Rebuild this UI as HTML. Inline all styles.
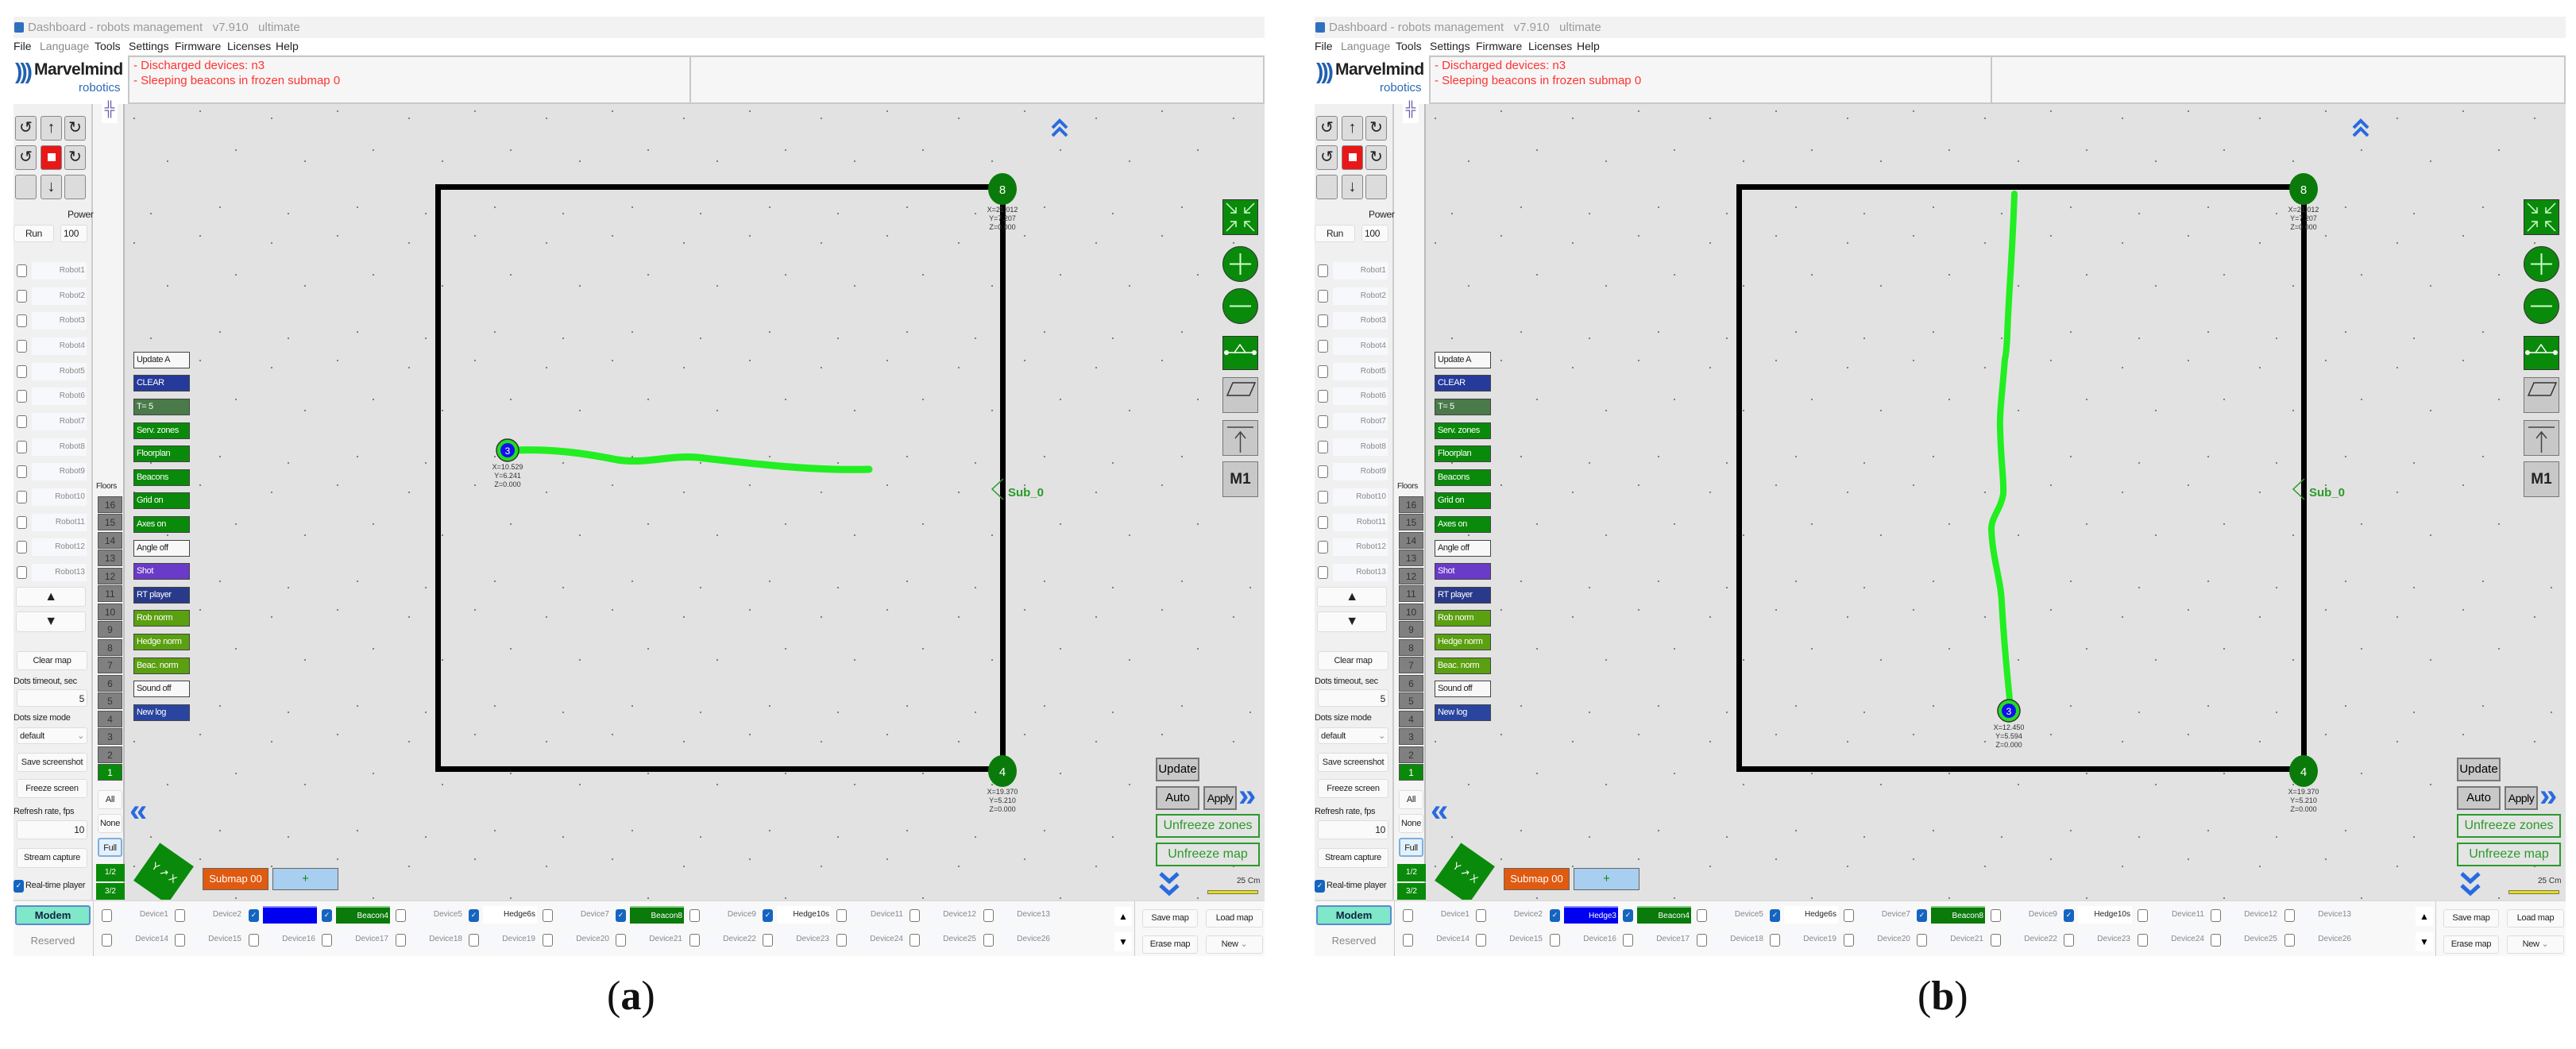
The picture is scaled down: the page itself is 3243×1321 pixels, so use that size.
<!DOCTYPE html>
<html><head><meta charset="utf-8">
<style>
*{margin:0;padding:0;box-sizing:border-box}
body{width:3243px;height:1321px;background:#fff;position:relative;overflow:hidden;font-family:"Liberation Sans",sans-serif}
.p{position:absolute;top:21px;width:1575px;height:1183px;background:#f0f0f0;overflow:hidden}
.a{position:absolute}
.tt{left:0;top:0;width:1575px;height:27px;background:#f2f2f2;color:#9a9a9a;font-size:15px;line-height:27px;padding-left:18px}
.ti{left:1px;top:7px;width:12px;height:13px;background:#2f6fc0;border-radius:2px}
.mn{left:0;top:27px;width:1575px;height:21px;background:#fff;font-size:14px;line-height:21px;color:#222}
.mn span{position:absolute;top:0}
.hb{top:49px;height:61px;background:#f6f6f6;border:2px solid #c8c8c8}
.msg{left:151px;color:#ff3333;font-size:15px}
.map{left:140px;top:110px}
.rb{width:27px;height:31px;background:#dcdcdc;border:1px solid #888;border-radius:3px;font-size:20px;text-align:center;line-height:29px;color:#222}
.btn{background:#fafafa;border:1px solid #ddd;border-radius:3px;font-size:11px;letter-spacing:-0.3px;text-align:center;color:#222;white-space:nowrap;overflow:hidden}
.cb{position:absolute;width:13px;height:16px;border:1.5px solid #777;border-radius:3px;background:#fff}
.ck{background:#1565c0;border-color:#1565c0;color:#fff;font-size:9px;line-height:13px;text-align:center}
.rl{position:absolute;left:19px;width:69px;height:22px;background:#f7f8fb;font-size:10px;color:#888;text-align:right;line-height:22px;padding-right:2px;white-space:nowrap;overflow:hidden}
.fl{left:106px;width:31px;height:21px;background:#808080;border:1px solid #555;font-size:12px;text-align:center;line-height:20px;color:#333}
.gb{left:151px;width:71px;height:21px;font-size:11px;letter-spacing:-0.4px;color:#fff;line-height:19px;padding-left:3px;border:1px solid #444;white-space:nowrap;overflow:hidden}
.lbl{font-size:11px;letter-spacing:-0.3px;color:#222;white-space:nowrap}
.dc{position:absolute;width:88px;height:24px}
.dc .rl{left:18px;width:68px}
.rt{left:1522px;width:45px;height:45px}
.gbtn{border:2px solid #2a9a2a;color:#2a9a2a;background:#e4e4e4;font-size:16px;text-align:center}
.cap{top:1225px;font-family:"Liberation Serif",serif;font-size:52px;color:#111}
.logo{left:26px;top:55px;font-size:21px;font-weight:bold;color:#222;letter-spacing:-0.5px}
</style></head><body>

<!-- ================= PANEL A ================= -->
<div class="p" style="left:17px">
<div class="a tt">Dashboard - robots management &nbsp; v7.910 &nbsp; ultimate</div>
<div class="a ti"></div>
<div class="a mn"><span style="left:0">File</span><span style="left:33px;color:#888">Language</span><span style="left:102px">Tools</span><span style="left:145px">Settings</span><span style="left:203px">Firmware</span><span style="left:269px">Licenses</span><span style="left:330px">Help</span></div>
<div class="a" style="left:0;top:48px;width:144px;height:62px;background:#fff"></div>
<div class="a" style="left:2px;top:53px;font-size:28px;font-weight:bold;color:#2060b0;letter-spacing:-3px">)))</div>
<div class="a logo">Marvelmind</div>
<div class="a" style="left:82px;top:81px;font-size:15px;color:#2a6ab8">robotics</div>
<div class="a hb" style="left:144px;width:709px"></div>
<div class="a hb" style="left:851px;width:724px"></div>
<div class="a msg" style="top:53px">- Discharged devices: n3</div>
<div class="a msg" style="top:72px">- Sleeping beacons in frozen submap 0</div>

<svg class="a map" width="1435" height="1002" viewBox="0 0 1435 1002">
<defs><pattern id="dt" width="173" height="157" patternUnits="userSpaceOnUse">
<circle cx="12" cy="18" r="1.1" fill="#777"/><circle cx="95" cy="9" r="1.1" fill="#777"/><circle cx="54" cy="72" r="1.1" fill="#777"/><circle cx="140" cy="58" r="1.1" fill="#777"/><circle cx="120" cy="130" r="1.1" fill="#777"/><circle cx="33" cy="138" r="1.1" fill="#777"/></pattern></defs>
<rect width="1435" height="1002" fill="#e2e2e2"/>
<rect width="1435" height="1002" fill="url(#dt)"/>
<rect x="394.5" y="104.5" width="711" height="733" fill="none" stroke="#000" stroke-width="7"/>
<path d="M490 436 C540 434 580 440 620 448 C660 454 690 440 730 446 C800 454 870 462 937 460" fill="none" stroke="#22ee22" stroke-width="9" stroke-linecap="round"/>
<circle cx="482" cy="436" r="14" fill="#22dd22" stroke="#333" stroke-width="1.5"/><circle cx="482" cy="436" r="9" fill="#1010ee"/>
<text x="482" y="441" font-size="12" fill="#fff" text-anchor="middle">3</text>
<text x="482" y="460" font-size="9" fill="#333" text-anchor="middle">X=10.529</text><text x="482" y="471" font-size="9" fill="#333" text-anchor="middle">Y=6.241</text><text x="482" y="482" font-size="9" fill="#333" text-anchor="middle">Z=0.000</text>
<ellipse cx="1105" cy="107" rx="18" ry="20" fill="#0a7a0a"/><text x="1105" y="113" font-size="15" fill="#fff" text-anchor="middle">8</text>
<text x="1105" y="136" font-size="9" fill="#333" text-anchor="middle">X=21.012</text><text x="1105" y="147" font-size="9" fill="#333" text-anchor="middle">Y=7.207</text><text x="1105" y="158" font-size="9" fill="#333" text-anchor="middle">Z=0.000</text>
<ellipse cx="1105" cy="840" rx="18" ry="20" fill="#0a7a0a"/><text x="1105" y="846" font-size="15" fill="#fff" text-anchor="middle">4</text>
<text x="1105" y="869" font-size="9" fill="#333" text-anchor="middle">X=19.370</text><text x="1105" y="880" font-size="9" fill="#333" text-anchor="middle">Y=5.210</text><text x="1105" y="891" font-size="9" fill="#333" text-anchor="middle">Z=0.000</text>
<path d="M1106 472 L1092 485 L1106 498" fill="none" stroke="#2a9a2a" stroke-width="1.5"/>
<text x="1112" y="494" font-size="15" font-weight="bold" fill="#2a9a2a">Sub_0</text>
<path d="M1168 30 L1177 21 L1186 30 M1168 40 L1177 31 L1186 40" fill="none" stroke="#2a6ae0" stroke-width="4"/>
</svg>

<div class="a" style="left:0;top:110px;width:100px;height:1002px;background:#f0f0f0;border-right:2px solid #ccc"></div>
<div class="a" style="left:100px;top:110px;width:40px;height:1002px;background:#f4f4f4;border-right:2px solid #bbb"></div>
<div class="a" style="left:111px;top:106px;width:20px;height:28px;background:#fff;color:#6a5aa8;font-size:18px;text-align:center">╬</div>
<div class="a rb" style="left:2px;top:125px">↺</div><div class="a rb" style="left:34px;top:125px">↑</div><div class="a rb" style="left:64px;top:125px">↻</div>
<div class="a rb" style="left:2px;top:162px">↺</div><div class="a rb" style="left:34px;top:162px;background:#e81818"><div style="width:10px;height:10px;background:#fff;margin:9px auto"></div></div><div class="a rb" style="left:64px;top:162px">↻</div>
<div class="a rb" style="left:2px;top:199px"></div><div class="a rb" style="left:34px;top:199px;color:#223">↓</div><div class="a rb" style="left:64px;top:199px"></div>
<div class="a lbl" style="left:68px;top:242px;font-size:12px">Power</div>
<div class="a btn" style="left:0;top:262px;width:51px;height:22px;line-height:20px;font-size:12px">Run</div>
<div class="a btn" style="left:59px;top:262px;width:34px;height:22px;line-height:20px;text-align:left;padding-left:3px;font-size:12px">100</div>

<div class="a" style="left:4px;top:309px;width:96px;height:420px">
<div class="cb" style="left:0;top:3px"></div><div class="rl" style="top:0">Robot1</div>
<div class="cb" style="left:0;top:35px"></div><div class="rl" style="top:32px">Robot2</div>
<div class="cb" style="left:0;top:66px"></div><div class="rl" style="top:63px">Robot3</div>
<div class="cb" style="left:0;top:98px"></div><div class="rl" style="top:95px">Robot4</div>
<div class="cb" style="left:0;top:130px"></div><div class="rl" style="top:127px">Robot5</div>
<div class="cb" style="left:0;top:161px"></div><div class="rl" style="top:158px">Robot6</div>
<div class="cb" style="left:0;top:193px"></div><div class="rl" style="top:190px">Robot7</div>
<div class="cb" style="left:0;top:225px"></div><div class="rl" style="top:222px">Robot8</div>
<div class="cb" style="left:0;top:256px"></div><div class="rl" style="top:253px">Robot9</div>
<div class="cb" style="left:0;top:288px"></div><div class="rl" style="top:285px">Robot10</div>
<div class="cb" style="left:0;top:320px"></div><div class="rl" style="top:317px">Robot11</div>
<div class="cb" style="left:0;top:351px"></div><div class="rl" style="top:348px">Robot12</div>
<div class="cb" style="left:0;top:383px"></div><div class="rl" style="top:380px">Robot13</div>
</div>
<div class="a btn" style="left:3px;top:718px;width:88px;height:25px;font-size:16px;line-height:24px">▲</div>
<div class="a btn" style="left:3px;top:749px;width:88px;height:26px;font-size:16px;line-height:24px">▼</div>

<div class="a lbl" style="left:104px;top:586px;font-size:10px">Floors</div>
<div class="a fl" style="top:604px">16</div><div class="a fl" style="top:626px">15</div><div class="a fl" style="top:649px">14</div><div class="a fl" style="top:671px">13</div><div class="a fl" style="top:694px">12</div><div class="a fl" style="top:716px">11</div><div class="a fl" style="top:739px">10</div><div class="a fl" style="top:761px">9</div><div class="a fl" style="top:784px">8</div><div class="a fl" style="top:806px">7</div><div class="a fl" style="top:829px">6</div><div class="a fl" style="top:851px">5</div><div class="a fl" style="top:874px">4</div><div class="a fl" style="top:896px">3</div><div class="a fl" style="top:919px">2</div><div class="a fl" style="top:941px;background:#0a8a0a;color:#fff">1</div>
<div class="a btn" style="left:106px;top:974px;width:31px;height:24px;font-size:11px;line-height:22px">All</div>
<div class="a btn" style="left:106px;top:1004px;width:31px;height:24px;font-size:11px;line-height:22px">None</div>
<div class="a btn" style="left:106px;top:1034px;width:31px;height:24px;font-size:11px;line-height:22px;border:2px solid #7ab0e0;background:#e4f0fb">Full</div>
<div class="a" style="left:104px;top:1067px;width:36px;height:22px;background:#0a8a0a;color:#fff;font-size:10px;text-align:center;line-height:22px">1/2</div>
<div class="a" style="left:104px;top:1091px;width:36px;height:22px;background:#0a8a0a;color:#fff;font-size:10px;text-align:center;line-height:22px">3/2</div>

<div class="a gb" style="top:422px;background:#f8f8f8;color:#222">Update A</div>
<div class="a gb" style="top:451px;background:#253a9a">CLEAR</div>
<div class="a gb" style="top:481px;background:#4a7a4a">T= 5</div>
<div class="a gb" style="top:511px;background:#0a8a0a">Serv. zones</div>
<div class="a gb" style="top:540px;background:#0a8a0a">Floorplan</div>
<div class="a gb" style="top:570px;background:#0a8a0a">Beacons</div>
<div class="a gb" style="top:599px;background:#0a8a0a">Grid on</div>
<div class="a gb" style="top:629px;background:#0a8a0a">Axes on</div>
<div class="a gb" style="top:659px;background:#f8f8f8;color:#222">Angle off</div>
<div class="a gb" style="top:688px;background:#6a3ac8">Shot</div>
<div class="a gb" style="top:718px;background:#2a3a8a">RT player</div>
<div class="a gb" style="top:747px;background:#5aa010">Rob norm</div>
<div class="a gb" style="top:777px;background:#5aa010">Hedge norm</div>
<div class="a gb" style="top:807px;background:#5aa010">Beac. norm</div>
<div class="a gb" style="top:836px;background:#f8f8f8;color:#222">Sound off</div>
<div class="a gb" style="top:866px;background:#2a45a0">New log</div>

<div class="a btn" style="left:4px;top:799px;width:89px;height:24px;line-height:22px">Clear map</div>
<div class="a lbl" style="left:0;top:831px">Dots timeout, sec</div>
<div class="a btn" style="left:4px;top:847px;width:89px;height:22px;text-align:right;padding-right:3px;line-height:22px;font-size:12px">5</div>
<div class="a lbl" style="left:0;top:877px">Dots size mode</div>
<div class="a btn" style="left:4px;top:895px;width:89px;height:21px;text-align:left;padding-left:3px;line-height:20px">default <span style="float:right;color:#888;padding-right:3px">⌄</span></div>
<div class="a btn" style="left:4px;top:927px;width:89px;height:24px;line-height:22px">Save screenshot</div>
<div class="a btn" style="left:4px;top:960px;width:89px;height:24px;line-height:22px">Freeze screen</div>
<div class="a lbl" style="left:0;top:995px">Refresh rate, fps</div>
<div class="a btn" style="left:4px;top:1012px;width:89px;height:24px;text-align:right;padding-right:3px;line-height:22px;font-size:12px">10</div>
<div class="a btn" style="left:4px;top:1047px;width:89px;height:25px;line-height:23px">Stream capture</div>
<div class="a cb ck" style="left:0;top:1087px">✓</div><div class="a lbl" style="left:15px;top:1088px">Real-time player</div>

<div class="a" style="left:146px;top:985px;font-size:40px;color:#2a6ae0;font-weight:bold;line-height:30px">«</div>
<div class="a" style="left:163px;top:1050px;width:52px;height:58px;background:#0a8a0a;transform:rotate(35deg);color:#fff;font-size:13px;text-align:center;line-height:56px">Y ↗ X</div>
<div class="a" style="left:238px;top:1072px;width:83px;height:28px;background:#e05a10;border:1px solid #666;color:#fff;font-size:13px;text-align:center;line-height:26px">Submap 00</div>
<div class="a" style="left:326px;top:1072px;width:83px;height:28px;background:#a8cef0;border:1px solid #666;color:#0a8a0a;font-size:15px;text-align:center;line-height:26px">+</div>

<div class="a rt" style="top:230px;background:#0a8a0a;border:1px solid #333"><svg width="43" height="43"><path d="M4 4 L16 16 M16 9 V16 H9 M39 4 L27 16 M27 9 V16 H34 M4 39 L16 27 M9 27 H16 V34 M39 39 L27 27 M34 27 H27 V34" stroke="#cfc" stroke-width="1.5" fill="none"/></svg></div>
<div class="a rt" style="top:289px;background:#0a8a0a;border-radius:50%;border:1px solid #333"><svg width="43" height="43"><path d="M21.5 8 V35 M8 21.5 H35" stroke="#cfc" stroke-width="2"/></svg></div>
<div class="a rt" style="top:342px;background:#0a8a0a;border-radius:50%;border:1px solid #333"><svg width="43" height="43"><path d="M8 21.5 H35" stroke="#cfc" stroke-width="2"/></svg></div>
<div class="a rt" style="top:402px;height:43px;background:#0a8a0a;border:1px solid #333"><svg width="43" height="41"><path d="M4 20 H39 M14 20 L21 10 L28 20" stroke="#fff" stroke-width="1.5" fill="none"/><circle cx="4" cy="20" r="3" fill="#fff"/><circle cx="39" cy="20" r="3" fill="#fff"/></svg></div>
<div class="a rt" style="top:454px;background:#c8c8c8;border:1px solid #777"><svg width="43" height="43"><path d="M12 6 H40 L33 22 H5 Z" stroke="#333" stroke-width="1.5" fill="none"/></svg></div>
<div class="a rt" style="top:508px;background:#c8c8c8;border:1px solid #777"><svg width="43" height="43"><path d="M5 8 H38 M21.5 40 V14 M15 22 L21.5 14 L28 22" stroke="#444" stroke-width="1.5" fill="none"/></svg></div>
<div class="a rt" style="top:560px;background:#c8c8c8;border:1px solid #777;font-size:19px;font-weight:bold;text-align:center;line-height:43px;color:#222">M1</div>

<div class="a" style="left:1438px;top:933px;width:55px;height:30px;background:#c8c8c8;border:2px solid #777;font-size:15px;text-align:center;line-height:26px">Update</div>
<div class="a" style="left:1438px;top:969px;width:55px;height:30px;background:#c8c8c8;border:2px solid #777;font-size:15px;text-align:center;line-height:26px">Auto</div>
<div class="a" style="left:1498px;top:969px;width:42px;height:30px;background:#c8c8c8;border:2px solid #777;font-size:14px;letter-spacing:-0.5px;text-align:center;line-height:26px">Apply</div>
<div class="a" style="left:1542px;top:963px;font-size:40px;color:#2a6ae0;font-weight:bold;line-height:36px">»</div>
<div class="a gbtn" style="left:1438px;top:1004px;width:131px;height:30px;line-height:26px">Unfreeze zones</div>
<div class="a gbtn" style="left:1438px;top:1040px;width:131px;height:30px;line-height:26px">Unfreeze map</div>
<svg class="a" style="left:1441px;top:1076px" width="28" height="34"><path d="M3 3 L14 13 L25 3 M3 18 L14 28 L25 18" stroke="#2a6ae0" stroke-width="5" fill="none"/></svg>
<div class="a" style="left:1540px;top:1083px;font-size:10px;color:#333">25 Cm</div>
<div class="a" style="left:1503px;top:1100px;width:64px;height:5px;background:#e8e000;border:1px solid #777"></div>

<div class="a" style="left:0;top:1112px;width:1575px;height:71px;background:#f8f8f8;border-top:2px solid #ddd"></div>
<div class="a" style="left:2px;top:1119px;width:95px;height:25px;background:#7ee8c8;border:2px solid #5a8ad0;border-radius:3px;font-size:13px;font-weight:bold;text-align:center;line-height:21px;color:#124">Modem</div>
<div class="a" style="left:2px;top:1151px;width:95px;height:25px;font-size:13px;text-align:center;line-height:25px;color:#888">Reserved</div>
<div class="a" style="left:100px;top:1114px;width:1px;height:69px;background:#ccc"></div>
<div class="a" style="left:0;top:1120px">
<div class="dc" style="left:111px"><div class="cb" style="top:4px"></div><div class="rl">Device1</div></div>
<div class="dc" style="left:203px"><div class="cb" style="top:4px"></div><div class="rl">Device2</div></div>
<div class="dc" style="left:296px"><div class="cb ck" style="top:4px">✓</div><div class="rl" style="background:#0000f0;border-top:2px solid #88f"></div></div>
<div class="dc" style="left:388px"><div class="cb ck" style="top:4px">✓</div><div class="rl" style="background:#0a7a0a;color:#fff;border-top:2px solid #8c8">Beacon4</div></div>
<div class="dc" style="left:481px"><div class="cb" style="top:4px"></div><div class="rl">Device5</div></div>
<div class="dc" style="left:573px"><div class="cb ck" style="top:4px">✓</div><div class="rl" style="background:#fff;color:#222">Hedge6s</div></div>
<div class="dc" style="left:666px"><div class="cb" style="top:4px"></div><div class="rl">Device7</div></div>
<div class="dc" style="left:758px"><div class="cb ck" style="top:4px">✓</div><div class="rl" style="background:#0a7a0a;color:#fff;border-top:2px solid #8c8">Beacon8</div></div>
<div class="dc" style="left:851px"><div class="cb" style="top:4px"></div><div class="rl">Device9</div></div>
<div class="dc" style="left:943px"><div class="cb ck" style="top:4px">✓</div><div class="rl" style="background:#fff;color:#222">Hedge10s</div></div>
<div class="dc" style="left:1036px"><div class="cb" style="top:4px"></div><div class="rl">Device11</div></div>
<div class="dc" style="left:1128px"><div class="cb" style="top:4px"></div><div class="rl">Device12</div></div>
<div class="dc" style="left:1221px"><div class="cb" style="top:4px"></div><div class="rl">Device13</div></div>
</div>
<div class="a" style="left:0;top:1151px">
<div class="dc" style="left:111px"><div class="cb" style="top:4px"></div><div class="rl">Device14</div></div>
<div class="dc" style="left:203px"><div class="cb" style="top:4px"></div><div class="rl">Device15</div></div>
<div class="dc" style="left:296px"><div class="cb" style="top:4px"></div><div class="rl">Device16</div></div>
<div class="dc" style="left:388px"><div class="cb" style="top:4px"></div><div class="rl">Device17</div></div>
<div class="dc" style="left:481px"><div class="cb" style="top:4px"></div><div class="rl">Device18</div></div>
<div class="dc" style="left:573px"><div class="cb" style="top:4px"></div><div class="rl">Device19</div></div>
<div class="dc" style="left:666px"><div class="cb" style="top:4px"></div><div class="rl">Device20</div></div>
<div class="dc" style="left:758px"><div class="cb" style="top:4px"></div><div class="rl">Device21</div></div>
<div class="dc" style="left:851px"><div class="cb" style="top:4px"></div><div class="rl">Device22</div></div>
<div class="dc" style="left:943px"><div class="cb" style="top:4px"></div><div class="rl">Device23</div></div>
<div class="dc" style="left:1036px"><div class="cb" style="top:4px"></div><div class="rl">Device24</div></div>
<div class="dc" style="left:1128px"><div class="cb" style="top:4px"></div><div class="rl">Device25</div></div>
<div class="dc" style="left:1221px"><div class="cb" style="top:4px"></div><div class="rl">Device26</div></div>
</div>
<div class="a" style="left:1386px;top:1121px;width:22px;height:24px;background:#fff;font-size:12px;text-align:center;line-height:24px">▲</div>
<div class="a" style="left:1386px;top:1153px;width:22px;height:24px;background:#fff;font-size:12px;text-align:center;line-height:24px">▼</div>
<div class="a" style="left:1411px;top:1114px;width:1px;height:69px;background:#ccc"></div>
<div class="a btn" style="left:1421px;top:1124px;width:70px;height:23px;line-height:21px">Save map</div>
<div class="a btn" style="left:1501px;top:1124px;width:72px;height:23px;line-height:21px">Load map</div>
<div class="a btn" style="left:1421px;top:1157px;width:70px;height:23px;line-height:21px">Erase map</div>
<div class="a btn" style="left:1501px;top:1157px;width:72px;height:23px;line-height:21px">New <span style="color:#888">⌄</span></div>
</div>

<!-- ================= PANEL B ================= -->
<div class="p" style="left:1655px">
<div class="a tt">Dashboard - robots management &nbsp; v7.910 &nbsp; ultimate</div>
<div class="a ti"></div>
<div class="a mn"><span style="left:0">File</span><span style="left:33px;color:#888">Language</span><span style="left:102px">Tools</span><span style="left:145px">Settings</span><span style="left:203px">Firmware</span><span style="left:269px">Licenses</span><span style="left:330px">Help</span></div>
<div class="a" style="left:0;top:48px;width:144px;height:62px;background:#fff"></div>
<div class="a" style="left:2px;top:53px;font-size:28px;font-weight:bold;color:#2060b0;letter-spacing:-3px">)))</div>
<div class="a logo">Marvelmind</div>
<div class="a" style="left:82px;top:81px;font-size:15px;color:#2a6ab8">robotics</div>
<div class="a hb" style="left:144px;width:709px"></div>
<div class="a hb" style="left:851px;width:724px"></div>
<div class="a msg" style="top:53px">- Discharged devices: n3</div>
<div class="a msg" style="top:72px">- Sleeping beacons in frozen submap 0</div>

<svg class="a map" width="1435" height="1002" viewBox="0 0 1435 1002">
<rect width="1435" height="1002" fill="#e2e2e2"/>
<rect width="1435" height="1002" fill="url(#dt)"/>
<rect x="394.5" y="104.5" width="711" height="733" fill="none" stroke="#000" stroke-width="7"/>
<path d="M741 113 C738 200 733 250 732 292 C731 310 730 318 729 321 C726 360 722 390 723 409 C724 450 728 475 727 491 C724 510 712 520 712 535 C713 570 724 600 725 627 C728 680 732 720 735 749" fill="none" stroke="#22ee22" stroke-width="8" stroke-linecap="round"/>
<circle cx="734" cy="764" r="14" fill="#22dd22" stroke="#333" stroke-width="1.5"/><circle cx="734" cy="764" r="9" fill="#1010ee"/>
<text x="734" y="769" font-size="12" fill="#fff" text-anchor="middle">3</text>
<text x="734" y="788" font-size="9" fill="#333" text-anchor="middle">X=12.450</text><text x="734" y="799" font-size="9" fill="#333" text-anchor="middle">Y=5.594</text><text x="734" y="810" font-size="9" fill="#333" text-anchor="middle">Z=0.000</text>
<ellipse cx="1105" cy="107" rx="18" ry="20" fill="#0a7a0a"/><text x="1105" y="113" font-size="15" fill="#fff" text-anchor="middle">8</text>
<text x="1105" y="136" font-size="9" fill="#333" text-anchor="middle">X=21.012</text><text x="1105" y="147" font-size="9" fill="#333" text-anchor="middle">Y=7.207</text><text x="1105" y="158" font-size="9" fill="#333" text-anchor="middle">Z=0.000</text>
<ellipse cx="1105" cy="840" rx="18" ry="20" fill="#0a7a0a"/><text x="1105" y="846" font-size="15" fill="#fff" text-anchor="middle">4</text>
<text x="1105" y="869" font-size="9" fill="#333" text-anchor="middle">X=19.370</text><text x="1105" y="880" font-size="9" fill="#333" text-anchor="middle">Y=5.210</text><text x="1105" y="891" font-size="9" fill="#333" text-anchor="middle">Z=0.000</text>
<path d="M1106 472 L1092 485 L1106 498" fill="none" stroke="#2a9a2a" stroke-width="1.5"/>
<text x="1112" y="494" font-size="15" font-weight="bold" fill="#2a9a2a">Sub_0</text>
<path d="M1168 30 L1177 21 L1186 30 M1168 40 L1177 31 L1186 40" fill="none" stroke="#2a6ae0" stroke-width="4"/>
</svg>

<div class="a" style="left:0;top:110px;width:100px;height:1002px;background:#f0f0f0;border-right:2px solid #ccc"></div>
<div class="a" style="left:100px;top:110px;width:40px;height:1002px;background:#f4f4f4;border-right:2px solid #bbb"></div>
<div class="a" style="left:111px;top:106px;width:20px;height:28px;background:#fff;color:#6a5aa8;font-size:18px;text-align:center">╬</div>
<div class="a rb" style="left:2px;top:125px">↺</div><div class="a rb" style="left:34px;top:125px">↑</div><div class="a rb" style="left:64px;top:125px">↻</div>
<div class="a rb" style="left:2px;top:162px">↺</div><div class="a rb" style="left:34px;top:162px;background:#e81818"><div style="width:10px;height:10px;background:#fff;margin:9px auto"></div></div><div class="a rb" style="left:64px;top:162px">↻</div>
<div class="a rb" style="left:2px;top:199px"></div><div class="a rb" style="left:34px;top:199px;color:#223">↓</div><div class="a rb" style="left:64px;top:199px"></div>
<div class="a lbl" style="left:68px;top:242px;font-size:12px">Power</div>
<div class="a btn" style="left:0;top:262px;width:51px;height:22px;line-height:20px;font-size:12px">Run</div>
<div class="a btn" style="left:59px;top:262px;width:34px;height:22px;line-height:20px;text-align:left;padding-left:3px;font-size:12px">100</div>

<div class="a" style="left:4px;top:309px;width:96px;height:420px">
<div class="cb" style="left:0;top:3px"></div><div class="rl" style="top:0">Robot1</div>
<div class="cb" style="left:0;top:35px"></div><div class="rl" style="top:32px">Robot2</div>
<div class="cb" style="left:0;top:66px"></div><div class="rl" style="top:63px">Robot3</div>
<div class="cb" style="left:0;top:98px"></div><div class="rl" style="top:95px">Robot4</div>
<div class="cb" style="left:0;top:130px"></div><div class="rl" style="top:127px">Robot5</div>
<div class="cb" style="left:0;top:161px"></div><div class="rl" style="top:158px">Robot6</div>
<div class="cb" style="left:0;top:193px"></div><div class="rl" style="top:190px">Robot7</div>
<div class="cb" style="left:0;top:225px"></div><div class="rl" style="top:222px">Robot8</div>
<div class="cb" style="left:0;top:256px"></div><div class="rl" style="top:253px">Robot9</div>
<div class="cb" style="left:0;top:288px"></div><div class="rl" style="top:285px">Robot10</div>
<div class="cb" style="left:0;top:320px"></div><div class="rl" style="top:317px">Robot11</div>
<div class="cb" style="left:0;top:351px"></div><div class="rl" style="top:348px">Robot12</div>
<div class="cb" style="left:0;top:383px"></div><div class="rl" style="top:380px">Robot13</div>
</div>
<div class="a btn" style="left:3px;top:718px;width:88px;height:25px;font-size:16px;line-height:24px">▲</div>
<div class="a btn" style="left:3px;top:749px;width:88px;height:26px;font-size:16px;line-height:24px">▼</div>

<div class="a lbl" style="left:104px;top:586px;font-size:10px">Floors</div>
<div class="a fl" style="top:604px">16</div><div class="a fl" style="top:626px">15</div><div class="a fl" style="top:649px">14</div><div class="a fl" style="top:671px">13</div><div class="a fl" style="top:694px">12</div><div class="a fl" style="top:716px">11</div><div class="a fl" style="top:739px">10</div><div class="a fl" style="top:761px">9</div><div class="a fl" style="top:784px">8</div><div class="a fl" style="top:806px">7</div><div class="a fl" style="top:829px">6</div><div class="a fl" style="top:851px">5</div><div class="a fl" style="top:874px">4</div><div class="a fl" style="top:896px">3</div><div class="a fl" style="top:919px">2</div><div class="a fl" style="top:941px;background:#0a8a0a;color:#fff">1</div>
<div class="a btn" style="left:106px;top:974px;width:31px;height:24px;font-size:11px;line-height:22px">All</div>
<div class="a btn" style="left:106px;top:1004px;width:31px;height:24px;font-size:11px;line-height:22px">None</div>
<div class="a btn" style="left:106px;top:1034px;width:31px;height:24px;font-size:11px;line-height:22px;border:2px solid #7ab0e0;background:#e4f0fb">Full</div>
<div class="a" style="left:104px;top:1067px;width:36px;height:22px;background:#0a8a0a;color:#fff;font-size:10px;text-align:center;line-height:22px">1/2</div>
<div class="a" style="left:104px;top:1091px;width:36px;height:22px;background:#0a8a0a;color:#fff;font-size:10px;text-align:center;line-height:22px">3/2</div>

<div class="a gb" style="top:422px;background:#f8f8f8;color:#222">Update A</div>
<div class="a gb" style="top:451px;background:#253a9a">CLEAR</div>
<div class="a gb" style="top:481px;background:#4a7a4a">T= 5</div>
<div class="a gb" style="top:511px;background:#0a8a0a">Serv. zones</div>
<div class="a gb" style="top:540px;background:#0a8a0a">Floorplan</div>
<div class="a gb" style="top:570px;background:#0a8a0a">Beacons</div>
<div class="a gb" style="top:599px;background:#0a8a0a">Grid on</div>
<div class="a gb" style="top:629px;background:#0a8a0a">Axes on</div>
<div class="a gb" style="top:659px;background:#f8f8f8;color:#222">Angle off</div>
<div class="a gb" style="top:688px;background:#6a3ac8">Shot</div>
<div class="a gb" style="top:718px;background:#2a3a8a">RT player</div>
<div class="a gb" style="top:747px;background:#5aa010">Rob norm</div>
<div class="a gb" style="top:777px;background:#5aa010">Hedge norm</div>
<div class="a gb" style="top:807px;background:#5aa010">Beac. norm</div>
<div class="a gb" style="top:836px;background:#f8f8f8;color:#222">Sound off</div>
<div class="a gb" style="top:866px;background:#2a45a0">New log</div>

<div class="a btn" style="left:4px;top:799px;width:89px;height:24px;line-height:22px">Clear map</div>
<div class="a lbl" style="left:0;top:831px">Dots timeout, sec</div>
<div class="a btn" style="left:4px;top:847px;width:89px;height:22px;text-align:right;padding-right:3px;line-height:22px;font-size:12px">5</div>
<div class="a lbl" style="left:0;top:877px">Dots size mode</div>
<div class="a btn" style="left:4px;top:895px;width:89px;height:21px;text-align:left;padding-left:3px;line-height:20px">default <span style="float:right;color:#888;padding-right:3px">⌄</span></div>
<div class="a btn" style="left:4px;top:927px;width:89px;height:24px;line-height:22px">Save screenshot</div>
<div class="a btn" style="left:4px;top:960px;width:89px;height:24px;line-height:22px">Freeze screen</div>
<div class="a lbl" style="left:0;top:995px">Refresh rate, fps</div>
<div class="a btn" style="left:4px;top:1012px;width:89px;height:24px;text-align:right;padding-right:3px;line-height:22px;font-size:12px">10</div>
<div class="a btn" style="left:4px;top:1047px;width:89px;height:25px;line-height:23px">Stream capture</div>
<div class="a cb ck" style="left:0;top:1087px">✓</div><div class="a lbl" style="left:15px;top:1088px">Real-time player</div>

<div class="a" style="left:146px;top:985px;font-size:40px;color:#2a6ae0;font-weight:bold;line-height:30px">«</div>
<div class="a" style="left:163px;top:1050px;width:52px;height:58px;background:#0a8a0a;transform:rotate(35deg);color:#fff;font-size:13px;text-align:center;line-height:56px">Y ↗ X</div>
<div class="a" style="left:238px;top:1072px;width:83px;height:28px;background:#e05a10;border:1px solid #666;color:#fff;font-size:13px;text-align:center;line-height:26px">Submap 00</div>
<div class="a" style="left:326px;top:1072px;width:83px;height:28px;background:#a8cef0;border:1px solid #666;color:#0a8a0a;font-size:15px;text-align:center;line-height:26px">+</div>

<div class="a rt" style="top:230px;background:#0a8a0a;border:1px solid #333"><svg width="43" height="43"><path d="M4 4 L16 16 M16 9 V16 H9 M39 4 L27 16 M27 9 V16 H34 M4 39 L16 27 M9 27 H16 V34 M39 39 L27 27 M34 27 H27 V34" stroke="#cfc" stroke-width="1.5" fill="none"/></svg></div>
<div class="a rt" style="top:289px;background:#0a8a0a;border-radius:50%;border:1px solid #333"><svg width="43" height="43"><path d="M21.5 8 V35 M8 21.5 H35" stroke="#cfc" stroke-width="2"/></svg></div>
<div class="a rt" style="top:342px;background:#0a8a0a;border-radius:50%;border:1px solid #333"><svg width="43" height="43"><path d="M8 21.5 H35" stroke="#cfc" stroke-width="2"/></svg></div>
<div class="a rt" style="top:402px;height:43px;background:#0a8a0a;border:1px solid #333"><svg width="43" height="41"><path d="M4 20 H39 M14 20 L21 10 L28 20" stroke="#fff" stroke-width="1.5" fill="none"/><circle cx="4" cy="20" r="3" fill="#fff"/><circle cx="39" cy="20" r="3" fill="#fff"/></svg></div>
<div class="a rt" style="top:454px;background:#c8c8c8;border:1px solid #777"><svg width="43" height="43"><path d="M12 6 H40 L33 22 H5 Z" stroke="#333" stroke-width="1.5" fill="none"/></svg></div>
<div class="a rt" style="top:508px;background:#c8c8c8;border:1px solid #777"><svg width="43" height="43"><path d="M5 8 H38 M21.5 40 V14 M15 22 L21.5 14 L28 22" stroke="#444" stroke-width="1.5" fill="none"/></svg></div>
<div class="a rt" style="top:560px;background:#c8c8c8;border:1px solid #777;font-size:19px;font-weight:bold;text-align:center;line-height:43px;color:#222">M1</div>

<div class="a" style="left:1438px;top:933px;width:55px;height:30px;background:#c8c8c8;border:2px solid #777;font-size:15px;text-align:center;line-height:26px">Update</div>
<div class="a" style="left:1438px;top:969px;width:55px;height:30px;background:#c8c8c8;border:2px solid #777;font-size:15px;text-align:center;line-height:26px">Auto</div>
<div class="a" style="left:1498px;top:969px;width:42px;height:30px;background:#c8c8c8;border:2px solid #777;font-size:14px;letter-spacing:-0.5px;text-align:center;line-height:26px">Apply</div>
<div class="a" style="left:1542px;top:963px;font-size:40px;color:#2a6ae0;font-weight:bold;line-height:36px">»</div>
<div class="a gbtn" style="left:1438px;top:1004px;width:131px;height:30px;line-height:26px">Unfreeze zones</div>
<div class="a gbtn" style="left:1438px;top:1040px;width:131px;height:30px;line-height:26px">Unfreeze map</div>
<svg class="a" style="left:1441px;top:1076px" width="28" height="34"><path d="M3 3 L14 13 L25 3 M3 18 L14 28 L25 18" stroke="#2a6ae0" stroke-width="5" fill="none"/></svg>
<div class="a" style="left:1540px;top:1083px;font-size:10px;color:#333">25 Cm</div>
<div class="a" style="left:1503px;top:1100px;width:64px;height:5px;background:#e8e000;border:1px solid #777"></div>

<div class="a" style="left:0;top:1112px;width:1575px;height:71px;background:#f8f8f8;border-top:2px solid #ddd"></div>
<div class="a" style="left:2px;top:1119px;width:95px;height:25px;background:#7ee8c8;border:2px solid #5a8ad0;border-radius:3px;font-size:13px;font-weight:bold;text-align:center;line-height:21px;color:#124">Modem</div>
<div class="a" style="left:2px;top:1151px;width:95px;height:25px;font-size:13px;text-align:center;line-height:25px;color:#888">Reserved</div>
<div class="a" style="left:100px;top:1114px;width:1px;height:69px;background:#ccc"></div>
<div class="a" style="left:0;top:1120px">
<div class="dc" style="left:111px"><div class="cb" style="top:4px"></div><div class="rl">Device1</div></div>
<div class="dc" style="left:203px"><div class="cb" style="top:4px"></div><div class="rl">Device2</div></div>
<div class="dc" style="left:296px"><div class="cb ck" style="top:4px">✓</div><div class="rl" style="background:#0000f0;color:#fff;border-top:2px solid #88f">Hedge3</div></div>
<div class="dc" style="left:388px"><div class="cb ck" style="top:4px">✓</div><div class="rl" style="background:#0a7a0a;color:#fff;border-top:2px solid #8c8">Beacon4</div></div>
<div class="dc" style="left:481px"><div class="cb" style="top:4px"></div><div class="rl">Device5</div></div>
<div class="dc" style="left:573px"><div class="cb ck" style="top:4px">✓</div><div class="rl" style="background:#fff;color:#222">Hedge6s</div></div>
<div class="dc" style="left:666px"><div class="cb" style="top:4px"></div><div class="rl">Device7</div></div>
<div class="dc" style="left:758px"><div class="cb ck" style="top:4px">✓</div><div class="rl" style="background:#0a7a0a;color:#fff;border-top:2px solid #8c8">Beacon8</div></div>
<div class="dc" style="left:851px"><div class="cb" style="top:4px"></div><div class="rl">Device9</div></div>
<div class="dc" style="left:943px"><div class="cb ck" style="top:4px">✓</div><div class="rl" style="background:#fff;color:#222">Hedge10s</div></div>
<div class="dc" style="left:1036px"><div class="cb" style="top:4px"></div><div class="rl">Device11</div></div>
<div class="dc" style="left:1128px"><div class="cb" style="top:4px"></div><div class="rl">Device12</div></div>
<div class="dc" style="left:1221px"><div class="cb" style="top:4px"></div><div class="rl">Device13</div></div>
</div>
<div class="a" style="left:0;top:1151px">
<div class="dc" style="left:111px"><div class="cb" style="top:4px"></div><div class="rl">Device14</div></div>
<div class="dc" style="left:203px"><div class="cb" style="top:4px"></div><div class="rl">Device15</div></div>
<div class="dc" style="left:296px"><div class="cb" style="top:4px"></div><div class="rl">Device16</div></div>
<div class="dc" style="left:388px"><div class="cb" style="top:4px"></div><div class="rl">Device17</div></div>
<div class="dc" style="left:481px"><div class="cb" style="top:4px"></div><div class="rl">Device18</div></div>
<div class="dc" style="left:573px"><div class="cb" style="top:4px"></div><div class="rl">Device19</div></div>
<div class="dc" style="left:666px"><div class="cb" style="top:4px"></div><div class="rl">Device20</div></div>
<div class="dc" style="left:758px"><div class="cb" style="top:4px"></div><div class="rl">Device21</div></div>
<div class="dc" style="left:851px"><div class="cb" style="top:4px"></div><div class="rl">Device22</div></div>
<div class="dc" style="left:943px"><div class="cb" style="top:4px"></div><div class="rl">Device23</div></div>
<div class="dc" style="left:1036px"><div class="cb" style="top:4px"></div><div class="rl">Device24</div></div>
<div class="dc" style="left:1128px"><div class="cb" style="top:4px"></div><div class="rl">Device25</div></div>
<div class="dc" style="left:1221px"><div class="cb" style="top:4px"></div><div class="rl">Device26</div></div>
</div>
<div class="a" style="left:1386px;top:1121px;width:22px;height:24px;background:#fff;font-size:12px;text-align:center;line-height:24px">▲</div>
<div class="a" style="left:1386px;top:1153px;width:22px;height:24px;background:#fff;font-size:12px;text-align:center;line-height:24px">▼</div>
<div class="a" style="left:1411px;top:1114px;width:1px;height:69px;background:#ccc"></div>
<div class="a btn" style="left:1421px;top:1124px;width:70px;height:23px;line-height:21px">Save map</div>
<div class="a btn" style="left:1501px;top:1124px;width:72px;height:23px;line-height:21px">Load map</div>
<div class="a btn" style="left:1421px;top:1157px;width:70px;height:23px;line-height:21px">Erase map</div>
<div class="a btn" style="left:1501px;top:1157px;width:72px;height:23px;line-height:21px">New <span style="color:#888">⌄</span></div>
</div>

<div class="a cap" style="left:764px">(<b>a</b>)</div>
<div class="a cap" style="left:2414px">(<b>b</b>)</div>
</body></html>
